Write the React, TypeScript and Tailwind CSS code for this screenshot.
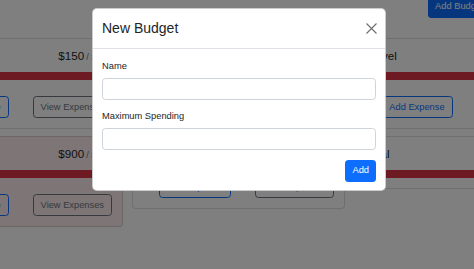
import React from "react";

type Budget = {
  name: string;
  amount: string;
  max?: string;
  progress?: number;
  danger?: boolean;
  buttons?: boolean;
};

const budgets: Budget[] = [
  { name: "Food", amount: "$150", max: "$100", progress: 100, buttons: true },
  { name: "Rent", amount: "$700", max: "$800", progress: 90, buttons: true },
  { name: "Travel", amount: "$400", max: "$450", progress: 95, buttons: true },
  { name: "Gas", amount: "$900", max: "$800", progress: 100, danger: true, buttons: true },
  { name: "Uncategorized", amount: "$0", buttons: true },
  { name: "Total", amount: "$2150", max: "$2150", progress: 100 },
];

const BudgetCard: React.FC<{ budget: Budget }> = ({ budget }) => {
  const hasBar = budget.progress !== undefined;
  return (
    <div
      className={`border border-black/[0.13] rounded-[4px] px-[10px] pt-[10px] pb-[10px] ${
        budget.danger ? "bg-[#fcebec]" : "bg-white"
      }`}
    >
      <div className="flex justify-between items-baseline h-[14px] leading-[14px] text-[11.6px] text-[#212529]">
        <span className="mr-[5px]">{budget.name}</span>
        <span className="flex items-baseline">
          {budget.amount}
          {budget.max && (
            <span className="text-[#6c757d] text-[9.3px] ml-[2px]">
              {" "}/ {budget.max}
            </span>
          )}
        </span>
      </div>
      {hasBar && (
        <div className="mt-[9px] h-[8px] rounded-full bg-[#e9ecef] overflow-hidden">
          <div
            className="h-full bg-[#dc3545] rounded-full"
            style={{ width: `${budget.progress}%` }}
          />
        </div>
      )}
      {budget.buttons && (
        <div className={`flex justify-end gap-[24px] ${hasBar ? "mt-[16px]" : "mt-[15px]"}`}>
          <button className="h-[22px] px-[7px] border border-[#0d6efd] text-[#0d6efd] rounded-[3.5px] text-[9.3px] leading-[20px]">
            Add Expense
          </button>
          <button className="h-[22px] px-[7px] border border-[#6c757d] text-[#6c757d] rounded-[3.5px] text-[9.3px] leading-[20px]">
            View Expenses
          </button>
        </div>
      )}
    </div>
  );
};

export default function App() {
  return (
    <div className="relative w-[474px] h-[269px] overflow-hidden bg-white font-['Liberation_Sans',Arial,sans-serif]">
      <div className="ml-[-90px] w-[657px] mt-[-4px]">
        <div className="flex items-center gap-[5px] h-[22px]">
          <h1 className="mr-auto text-[23px] font-medium text-[#212529]">Budgets</h1>
          <button className="h-[22px] px-[7px] bg-[#0d6efd] text-white rounded-[3.5px] text-[9.3px]">
            Add Budget
          </button>
          <button className="h-[22px] px-[7px] border border-[#0d6efd] text-[#0d6efd] rounded-[3.5px] text-[9.3px]">
            Add Expense
          </button>
        </div>
        <div className="grid grid-cols-3 gap-x-[9px] gap-y-[7px] items-start mt-[20px]">
          {budgets.map((b) => (
            <BudgetCard key={b.name} budget={b} />
          ))}
        </div>
      </div>

      <div className="absolute inset-0 bg-black/50" />

      <div className="absolute left-[92px] top-[8px] w-[294px] bg-white rounded-[5px] border border-black/20">
        <div className="h-[40px] flex items-center justify-between pl-[9px] pr-[8px] border-b border-[#dee2e6]">
          <span className="text-[14px] font-medium text-[#212529]">New Budget</span>
          <button className="w-[12px] h-[12px] flex items-center justify-center">
            <svg width="11" height="11" viewBox="0 0 11 11" fill="none">
              <path d="M0.5 0.5L10.5 10.5M10.5 0.5L0.5 10.5" stroke="#6b6b6b" strokeWidth="1.1" />
            </svg>
          </button>
        </div>
        <div className="px-[9px] pt-[10px] pb-[8px]">
          <div className="mb-[9px]">
            <label className="block text-[9.3px] leading-[14px] text-[#212529] mb-[5px]">Name</label>
            <input
              type="text"
              className="block w-full h-[22px] border border-[#ced4da] rounded-[3.5px] outline-none px-[7px] text-[9.3px]"
            />
          </div>
          <div className="mb-[10px]">
            <label className="block text-[9.3px] leading-[14px] text-[#212529] mb-[5px]">
              Maximum Spending
            </label>
            <input
              type="number"
              className="block w-full h-[22px] border border-[#ced4da] rounded-[3.5px] outline-none px-[7px] text-[9.3px]"
            />
          </div>
          <div className="flex justify-end">
            <button className="h-[22px] px-[7px] bg-[#0d6efd] text-white rounded-[3.5px] text-[9.3px]">
              Add
            </button>
          </div>
        </div>
      </div>
    </div>
  );
}
